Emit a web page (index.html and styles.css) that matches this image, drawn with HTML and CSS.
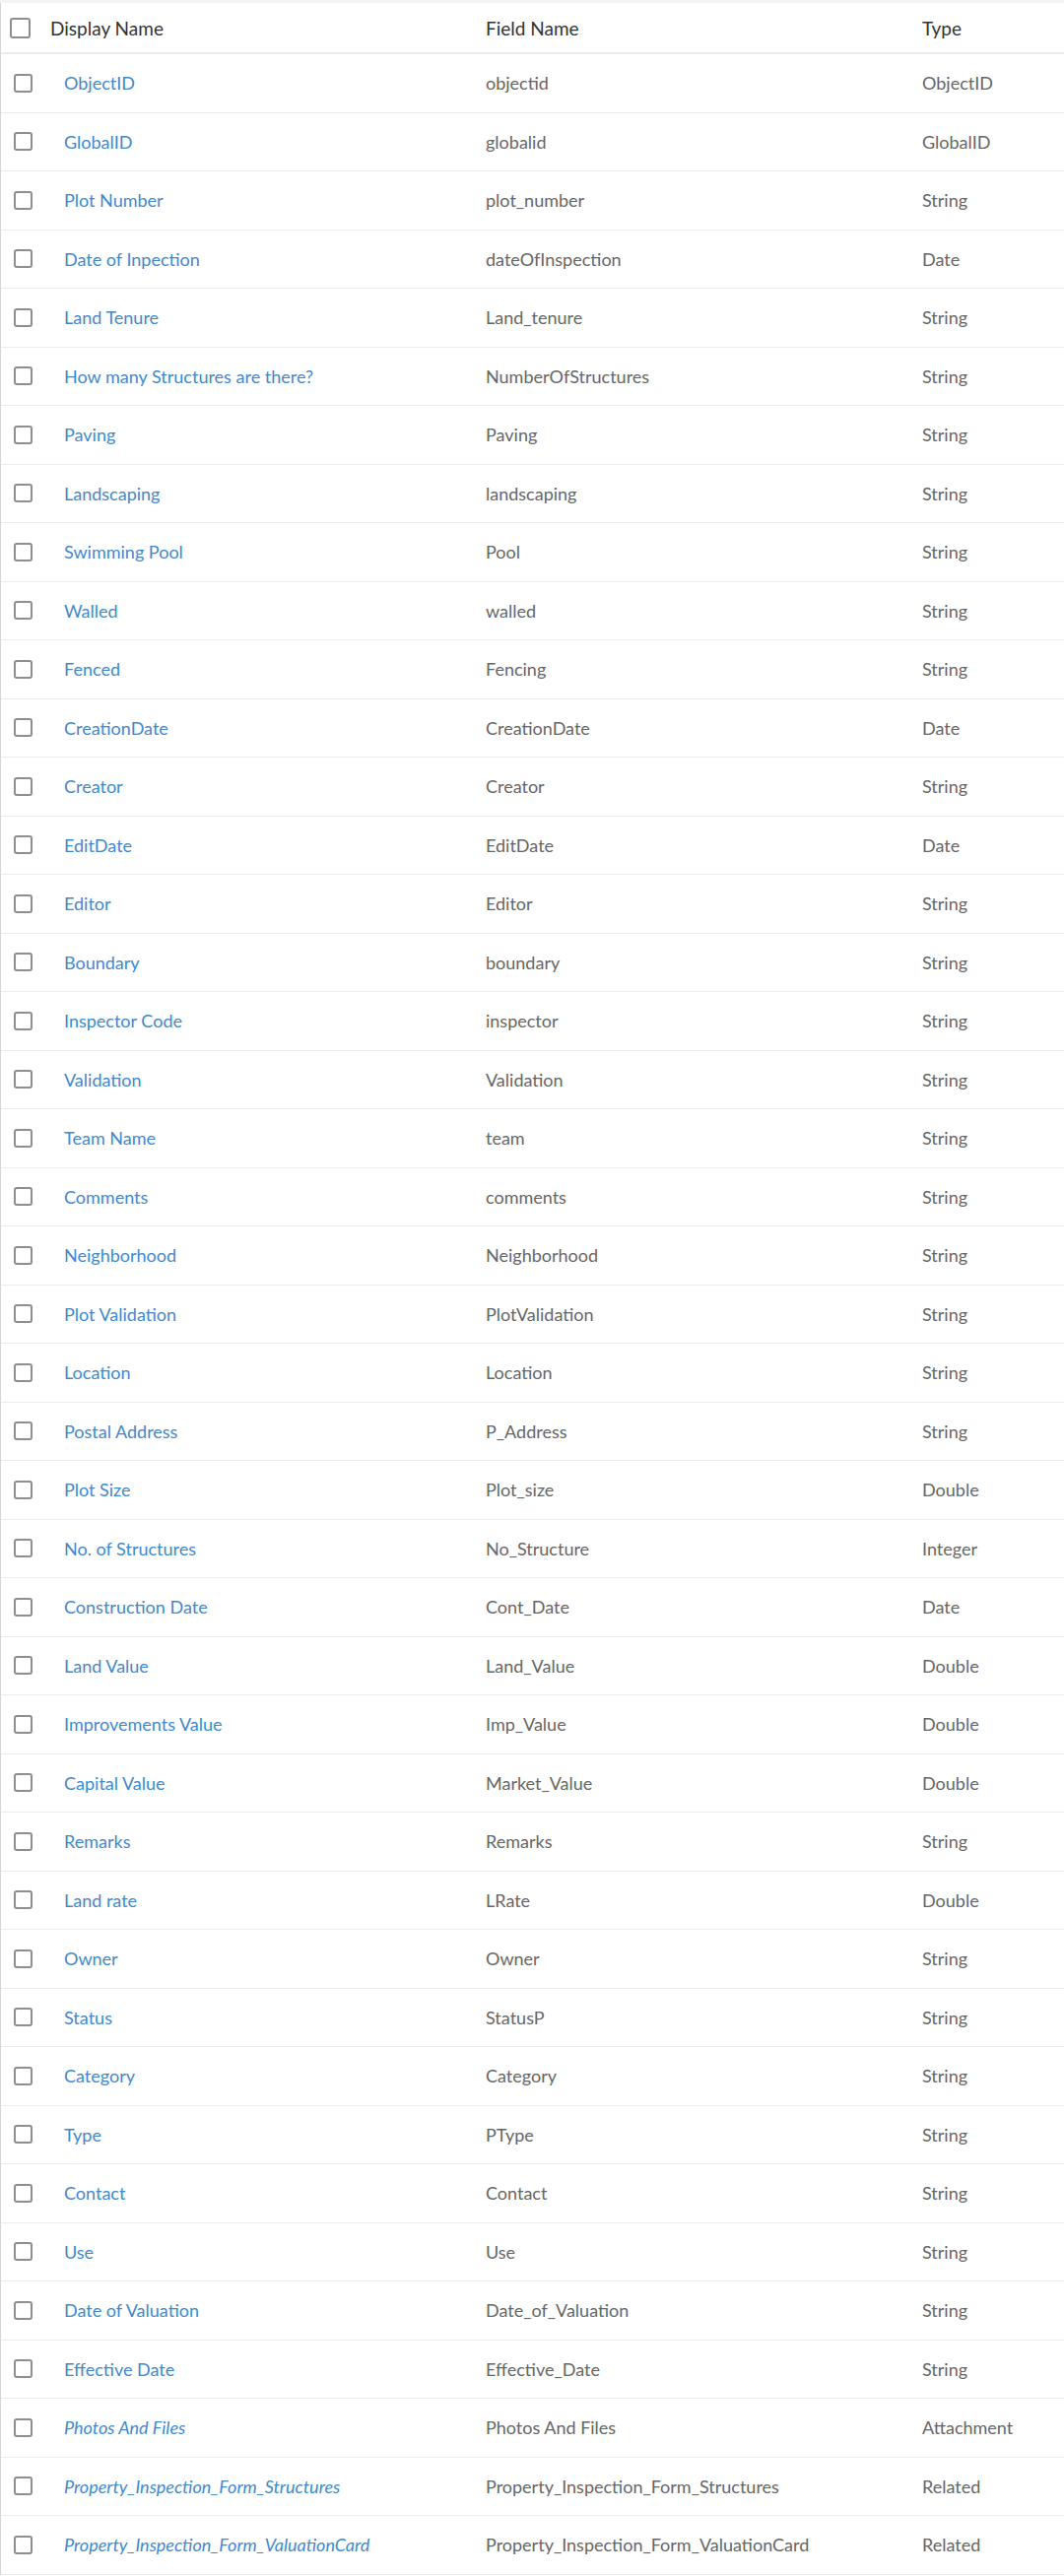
FILE: index.html
```html
<!DOCTYPE html>
<html lang="en">
<head>
  <meta charset="UTF-8" />
  <title>Fields</title>
  <link rel="stylesheet" href="styles.css">
</head>
<body>
  <div class="fields-table">
    <div class="head-row">
      <span class="check check-head"></span>
      <span class="col-display">Display Name</span>
      <span class="col-field">Field Name</span>
      <span class="col-type">Type</span>
    </div>
    <div id="rows"></div>
  </div>

  <script>
    const FIELDS = [
      ["ObjectID", "objectid", "ObjectID"],
      ["GlobalID", "globalid", "GlobalID"],
      ["Plot Number", "plot_number", "String"],
      ["Date of Inpection", "dateOfInspection", "Date"],
      ["Land Tenure", "Land_tenure", "String"],
      ["How many Structures are there?", "NumberOfStructures", "String"],
      ["Paving", "Paving", "String"],
      ["Landscaping", "landscaping", "String"],
      ["Swimming Pool", "Pool", "String"],
      ["Walled", "walled", "String"],
      ["Fenced", "Fencing", "String"],
      ["CreationDate", "CreationDate", "Date"],
      ["Creator", "Creator", "String"],
      ["EditDate", "EditDate", "Date"],
      ["Editor", "Editor", "String"],
      ["Boundary", "boundary", "String"],
      ["Inspector Code", "inspector", "String"],
      ["Validation", "Validation", "String"],
      ["Team Name", "team", "String"],
      ["Comments", "comments", "String"],
      ["Neighborhood", "Neighborhood", "String"],
      ["Plot Validation", "PlotValidation", "String"],
      ["Location", "Location", "String"],
      ["Postal Address", "P_Address", "String"],
      ["Plot Size", "Plot_size", "Double"],
      ["No. of Structures", "No_Structure", "Integer"],
      ["Construction Date", "Cont_Date", "Date"],
      ["Land Value", "Land_Value", "Double"],
      ["Improvements Value", "Imp_Value", "Double"],
      ["Capital Value", "Market_Value", "Double"],
      ["Remarks", "Remarks", "String"],
      ["Land rate", "LRate", "Double"],
      ["Owner", "Owner", "String"],
      ["Status", "StatusP", "String"],
      ["Category", "Category", "String"],
      ["Type", "PType", "String"],
      ["Contact", "Contact", "String"],
      ["Use", "Use", "String"],
      ["Date of Valuation", "Date_of_Valuation", "String"],
      ["Effective Date", "Effective_Date", "String"],
      ["Photos And Files", "Photos And Files", "Attachment", true],
      ["Property_Inspection_Form_Structures", "Property_Inspection_Form_Structures", "Related", true],
      ["Property_Inspection_Form_ValuationCard", "Property_Inspection_Form_ValuationCard", "Related", true]
    ];

    const rows = document.getElementById("rows");
    FIELDS.forEach(([display, field, type, special]) => {
      const row = document.createElement("div");
      row.className = "field-row";
      row.innerHTML =
        '<span class="check"></span>' +
        '<span class="col-display' + (special ? ' italic' : '') + '">' + display + '</span>' +
        '<span class="col-field">' + field + '</span>' +
        '<span class="col-type">' + type + '</span>';
      rows.appendChild(row);
    });
  </script>
</body>
</html>
```

FILE: styles.css
```css
html, body {
  margin: 0;
  padding: 0;
  background: #ffffff;
  font-family: 'Lato', 'Noto Sans', sans-serif;
}

body {
  border-top: 3px solid #f3f3f3;
}

.fields-table {
  border-left: 1px solid #d6d6d6;
}

.head-row,
.field-row {
  display: grid;
  align-items: center;
}

.head-row {
  grid-template-columns: 50px 442px 443px 1fr;
  height: 50px;
  border-bottom: 2px solid #ececec;
  font-size: 19px;
  color: #333333;
}

.field-row {
  grid-template-columns: 64px 428px 443px 1fr;
  height: 58.5px;
  border-bottom: 1px solid #ececec;
  font-size: 18px;
}

.check {
  display: block;
  width: 15px;
  height: 15px;
  border: 2px solid #8e8e8e;
  border-radius: 3px;
  margin-left: 13px;
}

.check-head {
  width: 17px;
  height: 17px;
  margin-left: 9px;
}

.field-row .col-display {
  color: #4189cc;
}

.field-row .col-display.italic {
  font-style: italic;
}

.field-row .col-field,
.field-row .col-type {
  color: #666666;
}
```
